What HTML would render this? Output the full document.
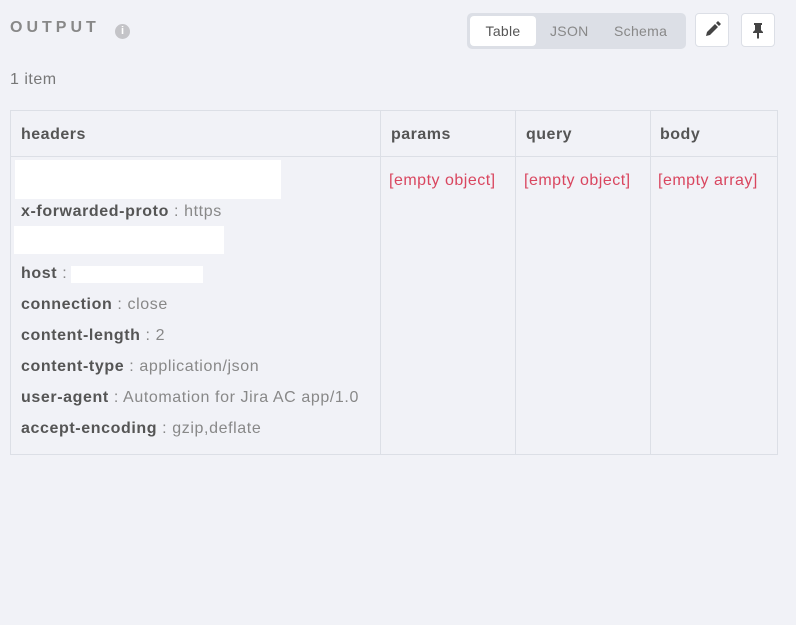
<!DOCTYPE html>
<html><head><style>
body{margin:0;width:796px;height:625px;background:#f1f2f7;font-family:"Liberation Sans",sans-serif;position:relative;overflow:hidden;color:#555}
.a{position:absolute}
.t{font-size:16px;letter-spacing:4px;font-weight:bold;color:#888;left:10px;top:19px}
.info{left:115px;top:24px;width:15px;height:15px;border-radius:50%;background:#c4c4c8;color:#fff;font-size:11px;font-weight:bold;text-align:center;line-height:15px}
.tabs{left:467px;top:13px;width:219px;height:36px;background:#dcdfe6;border-radius:5px}
.tab{position:absolute;top:3px;height:30px;line-height:30px;font-size:14px;color:#888;letter-spacing:0.3px}
.btn{top:13px;width:34px;height:34px;background:#fff;border:1px solid #dcdfe6;border-radius:4px;box-sizing:border-box}
.cell{position:absolute;border-right:1px solid #dcdfe6;border-bottom:1px solid #dcdfe6;box-sizing:border-box}
.h{font-weight:bold;font-size:16px;color:#555;letter-spacing:0.5px}
.red{color:#d9465f;font-size:16px;letter-spacing:0.5px}
.row{position:absolute;left:21px;font-size:16px;color:#888;white-space:nowrap;letter-spacing:0.6px}
.row b{color:#555}
.wb{position:absolute;background:#fff}
</style></head><body>
<div class="a t">OUTPUT</div>
<div class="a info">i</div>
<div class="a tabs">
 <div class="tab" style="left:3px;width:66px;background:#fff;border-radius:4px;text-align:center;color:#555">Table</div>
 <div class="tab" style="left:83px">JSON</div>
 <div class="tab" style="left:147px">Schema</div>
</div>
<div class="a btn" style="left:695px"><svg width="32" height="32" viewBox="0 0 32 32"><path d="M10 22l1-4 8-8 3 3-8 8zM20 9l2-2 3 3-2 2z" fill="#444"/></svg></div>
<div class="a btn" style="left:741px"><svg width="32" height="32" viewBox="0 0 32 32"><path d="M12 9h8v2h-1v5l2 2v1h-4v5l-1 1-1-1v-5h-4v-1l2-2v-5h-1z" fill="#444"/></svg></div>
<div class="a" style="left:10px;top:71px;font-size:16px;color:#777;letter-spacing:0.5px">1 item</div>
<div class="a" style="left:10px;top:110px;width:768px;height:345px;border-left:1px solid #dcdfe6;border-top:1px solid #dcdfe6;box-sizing:border-box">
 <div class="cell" style="left:0;top:0;width:370px;height:46px"></div>
 <div class="cell" style="left:370px;top:0;width:135px;height:46px"></div>
 <div class="cell" style="left:505px;top:0;width:135px;height:46px"></div>
 <div class="cell" style="left:640px;top:0;width:127px;height:46px"></div>
 <div class="cell" style="left:0;top:46px;width:370px;height:298px"></div>
 <div class="cell" style="left:370px;top:46px;width:135px;height:298px"></div>
 <div class="cell" style="left:505px;top:46px;width:135px;height:298px"></div>
 <div class="cell" style="left:640px;top:46px;width:127px;height:298px"></div>
</div>
<div class="a h" style="left:21px;top:126px">headers</div>
<div class="a h" style="left:391px;top:126px">params</div>
<div class="a h" style="left:526px;top:126px">query</div>
<div class="a h" style="left:660px;top:126px">body</div>
<div class="a red" style="left:389px;top:172px">[empty object]</div>
<div class="a red" style="left:524px;top:172px">[empty object]</div>
<div class="a red" style="left:658px;top:172px">[empty array]</div>
<div class="wb" style="left:15px;top:160px;width:266px;height:39px"></div>
<div class="wb" style="left:14px;top:226px;width:210px;height:28px"></div>
<div class="wb" style="left:71px;top:266px;width:132px;height:17px"></div>
<div class="row" style="top:203px"><b>x-forwarded-proto</b> : https</div>
<div class="row" style="top:265px"><b>host</b> :</div>
<div class="row" style="top:296px"><b>connection</b> : close</div>
<div class="row" style="top:327px"><b>content-length</b> : 2</div>
<div class="row" style="top:358px"><b>content-type</b> : application/json</div>
<div class="row" style="top:389px"><b>user-agent</b> : Automation for Jira AC app/1.0</div>
<div class="row" style="top:420px"><b>accept-encoding</b> : gzip,deflate</div>
</body></html>
